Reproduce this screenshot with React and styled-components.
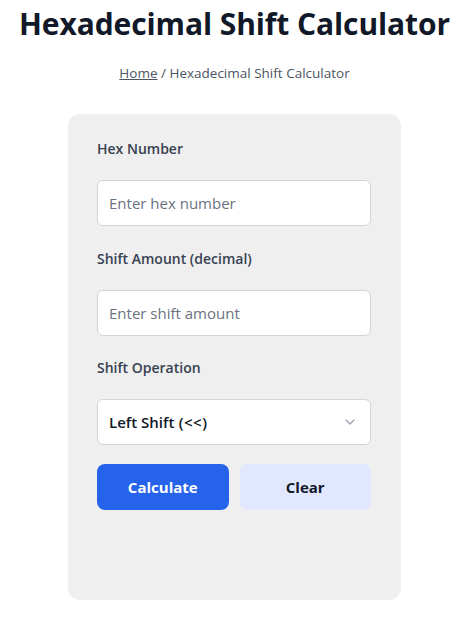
import React from 'react';
import styled, { createGlobalStyle } from 'styled-components';

const Global = createGlobalStyle`
    body {
        margin: 0;
        background: #fff;
        font-family: "Open Sans", "Noto Sans", sans-serif;
    }
    * { box-sizing: border-box; }
`

const Page = styled.div`
    display: flex;
    flex-direction: column;
    align-items: center;
    padding: 4px 5px 0 0;
`

const Title = styled.h1`
    margin: 0;
    font-size: 30px;
    font-weight: 700;
    color: #111827;
    line-height: 40px;
    letter-spacing: -0.1px;
`

const Crumbs = styled.div`
    margin-top: 19px;
    font-size: 13.5px;
    color: #4b5563;
    line-height: 20px;
`

const CrumbLink = styled.a`
    color: #4b5563;
    text-decoration: underline;
`

const Card = styled.div`
    margin-top: 31px;
    width: 333px;
    height: 486px;
    background: #efefef;
    border-radius: 12px;
    padding: 25px 30px 0 29px;
`

const Field = styled.div`
    display: flex;
    flex-direction: column;
    margin-bottom: 22.5px;
`

const Label = styled.label`
    font-size: 14px;
    font-weight: 600;
    color: #374151;
    line-height: 20px;
    margin-bottom: 21px;
`

const Input = styled.input`
    height: 46px;
    width: 100%;
    border: 1px solid #d1d5db;
    border-radius: 6px;
    background: #fff;
    padding: 0 11px;
    font-family: inherit;
    font-size: 15px;
    color: #111827;
    outline: none;
    &::placeholder { color: #6b7280; }
`

const SelectBox = styled.div`
    height: 46px;
    border: 1px solid #d1d5db;
    border-radius: 6px;
    background: #fff;
    display: flex;
    align-items: center;
    padding: 0 11px;
    font-size: 15px;
    font-weight: 600;
    color: #111827;
`

const Op = styled.span`
    letter-spacing: 0.5px;
`

const Chevron = styled.svg`
    margin-left: auto;
    margin-right: 1px;
`

const Buttons = styled.div`
    display: flex;
    gap: 11px;
    margin-top: -4px;
`

const Button = styled.button`
    flex: 1;
    height: 46px;
    border: none;
    border-radius: 8px;
    font-family: inherit;
    font-size: 15px;
    font-weight: 700;
    background: ${p => p.primary ? '#2563eb' : '#e0e7ff'};
    color: ${p => p.primary ? '#fff' : '#111827'};
`

export default function App() {
    return (
        <Page>
            <Global />
            <Title>Hexadecimal Shift Calculator</Title>
            <Crumbs><CrumbLink>Home</CrumbLink> / Hexadecimal Shift Calculator</Crumbs>
            <Card>
                <Field>
                    <Label>Hex Number</Label>
                    <Input placeholder="Enter hex number" />
                </Field>
                <Field>
                    <Label>Shift Amount (decimal)</Label>
                    <Input placeholder="Enter shift amount" />
                </Field>
                <Field>
                    <Label>Shift Operation</Label>
                    <SelectBox>
                        Left Shift <Op>&nbsp;(&lt;&lt;)</Op>
                        <Chevron width="16" height="16" viewBox="0 0 24 24" fill="none" stroke="#9ca3af" strokeWidth="2" strokeLinecap="round" strokeLinejoin="round">
                            <path d="M6 9l6 6 6-6" />
                        </Chevron>
                    </SelectBox>
                </Field>
                <Buttons>
                    <Button primary>Calculate</Button>
                    <Button>Clear</Button>
                </Buttons>
            </Card>
        </Page>
    );
}
